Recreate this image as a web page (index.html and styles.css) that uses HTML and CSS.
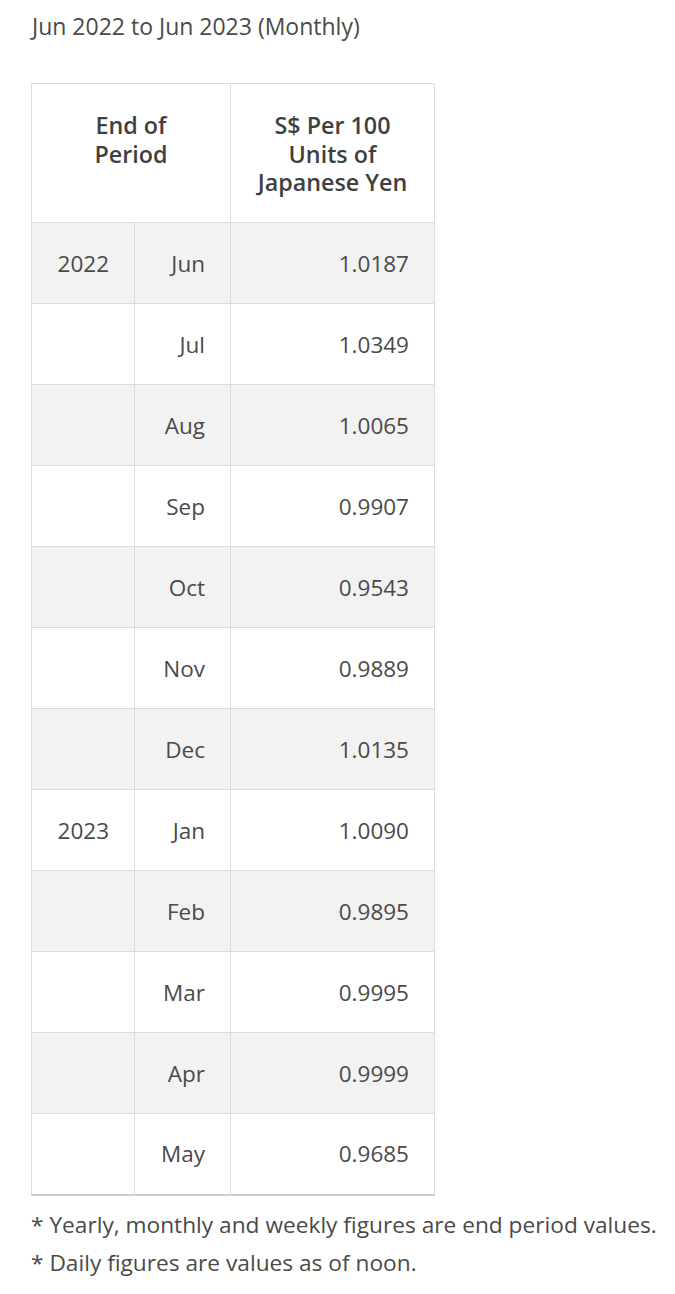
FILE: index.html
```html
<!DOCTYPE html>
<html>
<head>
<meta charset="utf-8">
<link rel="stylesheet" href="styles.css">
</head>
<body>
<div class="page">
  <p class="title">Jun 2022 to Jun 2023 (Monthly)</p>
  <table class="rates">
    <colgroup>
      <col class="c-year">
      <col class="c-month">
      <col class="c-value">
    </colgroup>
    <thead>
      <tr>
        <th colspan="2">End of<br>Period</th>
        <th>S$ Per 100<br>Units of<br>Japanese Yen</th>
      </tr>
    </thead>
    <tbody>
      <tr class="odd"><td>2022</td><td>Jun</td><td>1.0187</td></tr>
      <tr><td></td><td>Jul</td><td>1.0349</td></tr>
      <tr class="odd"><td></td><td>Aug</td><td>1.0065</td></tr>
      <tr><td></td><td>Sep</td><td>0.9907</td></tr>
      <tr class="odd"><td></td><td>Oct</td><td>0.9543</td></tr>
      <tr><td></td><td>Nov</td><td>0.9889</td></tr>
      <tr class="odd"><td></td><td>Dec</td><td>1.0135</td></tr>
      <tr><td>2023</td><td>Jan</td><td>1.0090</td></tr>
      <tr class="odd"><td></td><td>Feb</td><td>0.9895</td></tr>
      <tr><td></td><td>Mar</td><td>0.9995</td></tr>
      <tr class="odd"><td></td><td>Apr</td><td>0.9999</td></tr>
      <tr><td></td><td>May</td><td>0.9685</td></tr>
    </tbody>
  </table>
  <div class="notes">
    <p>* Yearly, monthly and weekly figures are end period values.</p>
    <p>* Daily figures are values as of noon.</p>
  </div>
</div>
</body>
</html>
```

FILE: styles.css
```css
html, body {
  margin: 0;
  padding: 0;
  background: #ffffff;
}

.page {
  padding: 8px 0 0 31px;
  font-family: "Open Sans", Lato, "Liberation Sans", sans-serif;
  color: #4a4a4a;
}

.title {
  margin: 0;
  font-size: 23px;
  line-height: 36px;
  padding-left: 1px;
}

.rates {
  margin-top: 39px;
  border-collapse: collapse;
  width: 403px;
  table-layout: fixed;
  font-size: 22.5px;
  border-bottom: 2px solid #cfcfcf;
}

.c-year { width: 103px; }
.c-month { width: 96px; }
.c-value { width: 204px; }

.rates th {
  height: 139px;
  padding: 27px 4px 0;
  font-size: 23.3px;
  font-weight: 600;
  line-height: 28.5px;
  text-align: center;
  vertical-align: top;
  border: 1px solid #dcdcdc;
  color: #3f3f3f;
  box-sizing: border-box;
}

.rates td {
  height: 81px;
  padding: 0 25px 0 6px;
  text-align: right;
  vertical-align: middle;
  border: 1px solid #dcdcdc;
  box-sizing: border-box;
}

.rates tr.odd td {
  background: #f2f2f2;
}

.notes {
  margin-top: 10px;
  font-size: 22.7px;
  line-height: 38px;
}

.notes p {
  margin: 0;
}
```
